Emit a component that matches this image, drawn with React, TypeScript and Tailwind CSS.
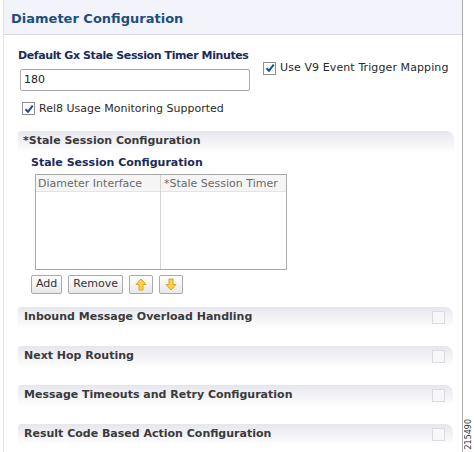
import React from "react"

const font = { fontFamily: '"DejaVu Sans", Verdana, sans-serif' }

function Check({ checked = false, faded = false }: { checked?: boolean; faded?: boolean }) {
    return (
        <span className={`inline-flex items-center justify-center w-[13px] h-[13px] border shrink-0 ${faded ? "border-[#dcdce0] bg-[#f7f7f9]" : "border-[#8f8f98] bg-white"}`}>
            {checked && (
                <svg width="10" height="10" viewBox="0 0 10 10">
                    <path d="M1.5 5.2 L4 7.8 L8.7 1.6" fill="none" stroke="#1b4a8f" strokeWidth="2" />
                </svg>
            )}
        </span>
    )
}

function Arrow({ down = false }: { down?: boolean }) {
    return (
        <button className="w-[24px] h-[19px] border border-[#a9a9a9] rounded-[2px] bg-gradient-to-b from-white to-[#e8e8e8] flex items-center justify-center">
            <svg width="12" height="13" viewBox="0 0 12 13" className={down ? "rotate-180" : ""}>
                <path d="M6 1 L11 6.5 L8 6.5 L8 12 L4 12 L4 6.5 L1 6.5 Z" fill="#fcd34a" stroke="#e0a020" strokeWidth="1" strokeLinejoin="round" />
            </svg>
        </button>
    )
}

function Bar({ title }: { title: string }) {
    return (
        <div className="h-[21px] rounded-tr-[8px] rounded-br-[8px] rounded-tl-[3px] bg-gradient-to-b from-[#e6e6ee] to-white flex items-center justify-between pl-[6px] pr-[8px]">
            <span className="text-[11px] font-bold text-[#3a3a3a]">{title}</span>
            <Check faded />
        </div>
    )
}

export default function App() {
    return (
        <div className="w-[474px] h-[452px] bg-white flex overflow-hidden" style={font}>
            <div className="ml-[3px] w-[460px] border-l border-[#e4e4e8] border-r border-r-[#a8a8a8] flex flex-col">
                <div className="h-[35px] bg-[#f3f4fb] border-b border-[#d8d8e0] flex items-center pl-[7px] pt-[3px]">
                    <h1 className="text-[13px] font-bold text-[#1d4f7c]">Diameter Configuration</h1>
                </div>

                <div className="pl-[14px] pr-[5px] pt-[13px] flex flex-col">
                    <div className="flex items-start">
                        <div className="flex flex-col">
                            <label className="text-[11px] font-bold text-[#1a2c5b] tracking-[-0.4px]">Default Gx Stale Session Timer Minutes</label>
                            <input
                                defaultValue="180"
                                className="mt-[4px] ml-[2px] w-[230px] h-[22px] border border-[#a8a8b0] rounded-[2px] px-[3px] text-[11px] text-[#222] outline-none"
                            />
                        </div>
                        <div className="flex items-center gap-[4px] ml-[13px] mt-[12px]">
                            <Check checked />
                            <span className="text-[11px] text-[#2a2a2a] tracking-[0.1px]">Use V9 Event Trigger Mapping</span>
                        </div>
                    </div>

                    <div className="flex items-center gap-[4px] ml-[4px] mt-[10px]">
                        <Check checked />
                        <span className="text-[11px] text-[#2a2a2a]">Rel8 Usage Monitoring Supported</span>
                    </div>

                    <div className="mt-[14px] h-[21px] rounded-tl-[3px] rounded-tr-[8px] bg-gradient-to-b from-[#e6e6ee] to-white flex items-center pl-[5px] mr-[3px]">
                        <span className="text-[11px] font-bold text-[#3a3a3a]">*Stale Session Configuration</span>
                    </div>

                    <div className="pl-[13px] mt-[3px] flex flex-col">
                        <span className="text-[11px] font-bold text-[#1a2c5b]">Stale Session Configuration</span>
                        <div className="mt-[2px] ml-[4px] w-[252px] h-[96px] border border-[#a8a8a8] flex">
                            <div className="w-[125px] border-r border-[#d4d4d4] flex flex-col">
                                <div className="h-[17px] bg-[#f5f5f5] border-b border-[#e4e4e4] pl-[2px] text-[11px] text-[#6a6a6a] leading-[17px]">Diameter Interface</div>
                            </div>
                            <div className="flex-1 flex flex-col">
                                <div className="h-[17px] bg-[#f5f5f5] border-b border-[#e4e4e4] pl-[3px] text-[11px] text-[#6a6a6a] leading-[17px]">*Stale Session Timer</div>
                            </div>
                        </div>
                        <div className="flex gap-[6px] mt-[5px]">
                            <button className="h-[19px] px-[4px] border border-[#a9a9a9] rounded-[2px] bg-gradient-to-b from-white to-[#e8e8e8] text-[11px] text-[#333]">Add</button>
                            <button className="h-[19px] px-[4px] border border-[#a9a9a9] rounded-[2px] bg-gradient-to-b from-white to-[#e8e8e8] text-[11px] text-[#333]">Remove</button>
                            <Arrow />
                            <Arrow down />
                        </div>
                    </div>

                    <div className="mt-[13px] flex flex-col gap-[18px] mr-[4px]">
                        <Bar title="Inbound Message Overload Handling" />
                        <Bar title="Next Hop Routing" />
                        <Bar title="Message Timeouts and Retry Configuration" />
                        <Bar title="Result Code Based Action Configuration" />
                    </div>
                </div>
            </div>
            <div className="flex-1 flex flex-col justify-end items-center pb-[2px]">
                <span className="text-[8px] text-[#333] rotate-180 [writing-mode:vertical-rl] leading-none">215490</span>
            </div>
        </div>
    )
}
